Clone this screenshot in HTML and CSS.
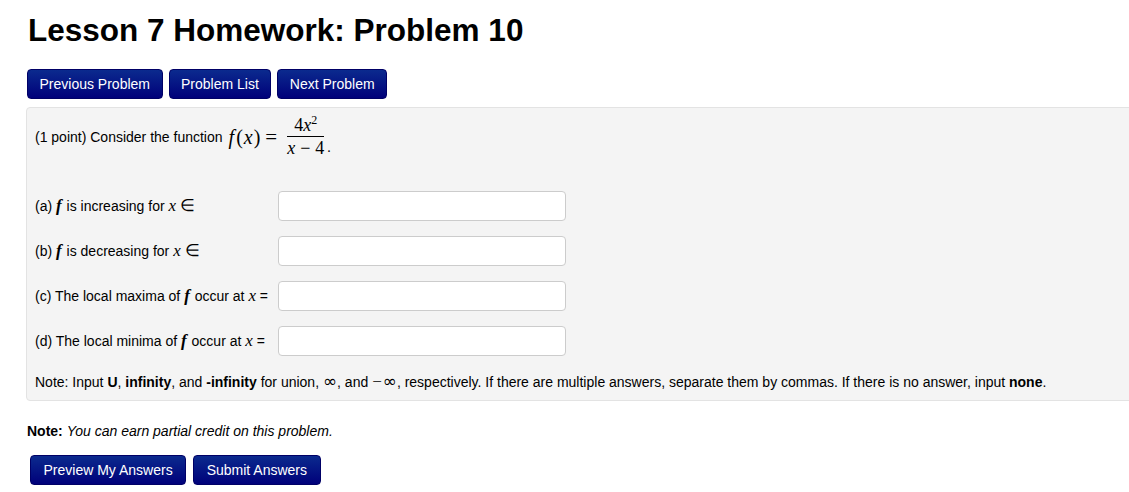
FILE: index.html
```html
<!DOCTYPE html>
<html>
<head>
<meta charset="utf-8">
<title>Lesson 7 Homework: Problem 10</title>
<link rel="stylesheet" href="styles.css">
</head>
<body>
<div class="page">
  <h1 class="title">Lesson 7 Homework: Problem 10</h1>
  <nav class="nav">
    <a class="btn">Previous Problem</a>
    <a class="btn">Problem List</a>
    <a class="btn">Next Problem</a>
  </nav>
  <div class="problem">
    <p class="intro">(1 point) Consider the function <span class="math fx">f</span><span class="mrm big">(</span><span class="math fx2">x</span><span class="mrm big">)</span><span class="mrm eq">=</span><span class="frac"><span class="num"><span class="mrm">4</span><span class="math">x</span><sup class="sup">2</sup></span><span class="den"><span class="math">x</span><span class="mrm op">−</span><span class="mrm">4</span></span></span><span class="mrm dot">.</span></p>
    <div class="answers">
      <label class="lbl">(a) <span class="math mf">f</span> is increasing for <span class="math">x</span> <span class="mrm in">∈</span></label>
      <input class="ans" type="text">
      <label class="lbl">(b) <span class="math mf">f</span> is decreasing for <span class="math">x</span> <span class="mrm in">∈</span></label>
      <input class="ans" type="text">
      <label class="lbl">(c) The local maxima of <span class="math mf">f</span> occur at <span class="math">x</span> =</label>
      <input class="ans" type="text">
      <label class="lbl">(d) The local minima of <span class="math mf">f</span> occur at <span class="math">x</span> =</label>
      <input class="ans" type="text">
    </div>
    <p class="hint">Note: Input <b>U</b>, <b>infinity</b>, and <b>-infinity</b> for union, <span class="inf">∞</span>, and <span class="neg">−</span><span class="inf">∞</span>, respectively. If there are multiple answers, separate them by commas. If there is no answer, input <b>none</b>.</p>
  </div>
  <p class="credit"><b>Note:</b> <i>You can earn partial credit on this problem.</i></p>
  <div class="actions">
    <button class="btn big" type="button">Preview My Answers</button>
    <button class="btn big" type="button">Submit Answers</button>
  </div>
</div>
</body>
</html>
```

FILE: styles.css
```css
html, body {
  margin: 0;
  padding: 0;
  background: #fff;
  overflow: hidden;
}
body {
  font-family: "Liberation Sans", Arial, sans-serif;
  font-size: 14px;
  color: #000;
}
.page {
  padding: 0 0 0 26px;
}
.title {
  font-size: 31.5px;
  font-weight: bold;
  line-height: 36px;
  margin: 12px 0 0 2px;
}
.nav {
  display: flex;
  gap: 6px;
  margin: 21px 0 0 1px;
}
.btn {
  display: inline-block;
  box-sizing: border-box;
  height: 30px;
  line-height: 28px;
  padding: 0 11.5px;
  font-family: "Liberation Sans", Arial, sans-serif;
  font-size: 14px;
  color: #fff;
  background: linear-gradient(to bottom, #0b2a8e, #00007a);
  border: 1px solid #000066;
  border-radius: 4px;
  text-decoration: none;
  cursor: pointer;
}
.btn.big {
  padding: 0 12.5px;
}
.problem {
  margin: 8px -40px 0 0;
  background: #f4f4f4;
  border: 1px solid #e3e3e3;
  border-radius: 4px;
  padding: 9px 8px 8px 8px;
}
.intro {
  margin: 0;
  display: flex;
  align-items: center;
  height: 40px;
}
.math {
  font-family: "Liberation Serif", "Times New Roman", serif;
  font-style: italic;
  font-size: 18px;
}
.mrm {
  font-family: "Liberation Serif", "Times New Roman", serif;
  font-size: 18px;
}
.mrm.big {
  font-size: 20px;
}
.fx {
  font-size: 20px;
  margin-left: 6px;
  margin-right: 2px;
}
.fx2 {
  font-size: 20px;
  margin: 0 1px;
}
.eq {
  margin: 0 8px 0 5px;
  font-size: 21px;
}
.frac {
  display: inline-flex;
  flex-direction: column;
  align-items: center;
  margin: 0 1px 0 0;
}
.num {
  padding: 0 7px 1px;
  line-height: 18px;
  border-bottom: 1px solid #000;
}
.den {
  padding: 2px 2px 0;
  line-height: 18px;
}
.sup {
  font-family: "Liberation Serif", serif;
  font-size: 12px;
  vertical-align: 7px;
  line-height: 0;
}
.op {
  margin: 0 5px;
}
.dot {
  align-self: flex-end;
  font-size: 14px;
  line-height: 18px;
}
.answers {
  display: grid;
  grid-template-columns: 239px 288px;
  column-gap: 4px;
  row-gap: 15px;
  align-items: center;
  margin-top: 34px;
}
.lbl {
  white-space: nowrap;
  line-height: 20px;
}
.lbl .math {
  font-size: 17px;
  line-height: 0;
}
.mf {
  font-weight: bold;
  margin-right: 1px;
}
.in {
  font-size: 17px;
  line-height: 0;
}
.ans {
  box-sizing: border-box;
  width: 288px;
  height: 30px;
  margin: 0;
  border: 1px solid #cccccc;
  border-radius: 4px;
  background: #fff;
}
.hint {
  margin: 16px 0 0 0;
  line-height: 20px;
}
.inf {
  font-family: "DejaVu Sans", sans-serif;
  font-size: 17px;
  line-height: 0;
}
.neg {
  font-family: "Liberation Serif", serif;
  font-size: 17px;
  line-height: 0;
  margin-right: 1px;
}
.credit {
  margin: 20px 0 0 1px;
  line-height: 20px;
}
.credit i {
  font-style: italic;
}
.actions {
  display: flex;
  gap: 7px;
  margin: 14px 0 0 4px;
}
```
